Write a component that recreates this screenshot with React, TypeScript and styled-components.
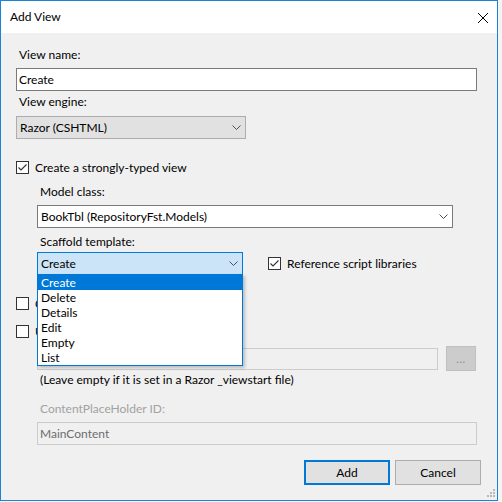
import React from "react";
import styled, { createGlobalStyle } from "styled-components";

const GlobalStyle = createGlobalStyle`
  html, body { margin: 0; padding: 0; background: #f4f4f4; }
  body {
    font-family: "Segoe UI", Lato, "Open Sans", sans-serif;
    font-size: 12px;
    color: #000000;
  }
`;

const Window = styled.div`
  position: relative;
  width: 498px;
  height: 501px;
  box-sizing: border-box;
  border: 1px solid #1883d7;
  background-color: #f0f0f0;
  display: flex;
  flex-direction: column;
`;

const TitleBar = styled.div`
  height: 32px;
  background-color: #ffffff;
  display: flex;
  align-items: center;
  justify-content: space-between;
  padding: 0 9px 0 9px;
  flex-shrink: 0;
`;

const TitleText = styled.span`
  font-size: 12px;
  line-height: 16px;
`;

const CloseBtn = styled.span`
  display: flex;
  width: 10px;
  height: 10px;
  margin-top: 1px;
`;

const Body = styled.div`
  padding: 0 20px 0 15px;
  display: flex;
  flex-direction: column;
`;

const Label = styled.div<{ $mt: number; $disabled?: boolean }>`
  margin-top: ${(p) => p.$mt}px;
  height: 16px;
  line-height: 16px;
  padding-left: 3px;
  white-space: nowrap;
  flex-shrink: 0;
  color: ${(p) => (p.$disabled ? "#a2a2a2" : "#000000")};
`;

const TextBox = styled.div<{ $mt?: number; $disabled?: boolean; $h?: number }>`
  margin-top: ${(p) => p.$mt ?? 0}px;
  height: ${(p) => p.$h ?? 23}px;
  box-sizing: border-box;
  border: 1px solid ${(p) => (p.$disabled ? "#cccccc" : "#7a7a7a")};
  background-color: ${(p) => (p.$disabled ? "#f0f0f0" : "#ffffff")};
  color: ${(p) => (p.$disabled ? "#6d6d6d" : "#000000")};
  display: flex;
  align-items: center;
  padding-left: 2px;
  flex-shrink: 0;
`;

const PathBox = styled(TextBox)`
  flex: 1;
`;

const Select = styled.div<{ $mt?: number; $w: number; $variant: "button" | "plain" | "focus" }>`
  position: relative;
  margin-top: ${(p) => p.$mt ?? 0}px;
  width: ${(p) => p.$w}px;
  height: 23px;
  box-sizing: border-box;
  border: 1px solid
    ${(p) => (p.$variant === "button" ? "#adadad" : p.$variant === "focus" ? "#0078d7" : "#7a7a7a")};
  background-color: ${(p) =>
    p.$variant === "button" ? "#e1e1e1" : p.$variant === "focus" ? "#cce4f7" : "#ffffff"};
  display: flex;
  align-items: center;
  justify-content: space-between;
  padding: 0 4px 0 3px;
  flex-shrink: 0;
`;

const Chevron = () => (
  <svg width="9" height="5" viewBox="0 0 9 5">
    <polyline points="0.5,0.5 4.5,4.5 8.5,0.5" fill="none" stroke="#505050" strokeWidth="1" />
  </svg>
);

const CheckRow = styled.div<{ $mt?: number }>`
  margin-top: ${(p) => p.$mt ?? 0}px;
  height: 16px;
  display: flex;
  align-items: center;
  gap: 6px;
  white-space: nowrap;
  flex-shrink: 0;
`;

const Box = styled.span`
  width: 13px;
  height: 13px;
  box-sizing: border-box;
  border: 1px solid #333333;
  background-color: #ffffff;
  display: flex;
  align-items: center;
  justify-content: center;
  flex-shrink: 0;
`;

const CheckBox = ({ checked }: { checked?: boolean }) => (
  <Box>
    {checked && (
      <svg width="11" height="11" viewBox="0 0 11 11">
        <polyline points="1.5,5.5 4,8 9.5,2.5" fill="none" stroke="#333333" strokeWidth="1.1" />
      </svg>
    )}
  </Box>
);

const Indent = styled.div`
  padding-left: 21px;
  display: flex;
  flex-direction: column;
`;

const ScaffoldRow = styled.div`
  margin-top: 2px;
  display: flex;
  align-items: center;
  gap: 25px;
`;

const DropList = styled.ul`
  position: absolute;
  left: -1px;
  top: 21px;
  width: 206px;
  margin: 0;
  padding: 0;
  list-style: none;
  box-sizing: border-box;
  border: 1px solid #0078d7;
  background-color: #ffffff;
  box-shadow: 2px 2px 3px rgba(0, 0, 0, 0.22);
  z-index: 2;
`;

const DropItem = styled.li<{ $active?: boolean }>`
  height: 15px;
  line-height: 15px;
  padding-left: 3px;
  background-color: ${(p) => (p.$active ? "#0078d7" : "transparent")};
  color: ${(p) => (p.$active ? "#ffffff" : "#000000")};
`;

const FileRow = styled.div`
  margin-top: 7px;
  height: 25px;
  display: flex;
  align-items: center;
  gap: 8px;
`;

const BrowseBtn = styled.div`
  width: 30px;
  height: 25px;
  box-sizing: border-box;
  border: 1px solid #bfbfbf;
  background-color: #cccccc;
  color: #8a8a8a;
  display: flex;
  align-items: center;
  justify-content: center;
  font-size: 11px;
  letter-spacing: 0.5px;
  margin-right: 1px;
`;

const ButtonRow = styled.div`
  margin-top: 15px;
  margin-right: -4px;
  display: flex;
  justify-content: flex-end;
  gap: 5px;
`;

const Button = styled.div<{ $default?: boolean }>`
  width: 86px;
  height: 25px;
  box-sizing: border-box;
  border: ${(p) => (p.$default ? "2px solid #0078d7" : "1px solid #adadad")};
  background-color: #e1e1e1;
  display: flex;
  align-items: center;
  justify-content: center;
`;

const Grip = styled.svg`
  position: absolute;
  right: 2px;
  bottom: 3px;
`;

const options = ["Create", "Delete", "Details", "Edit", "Empty", "List"];

export default function App() {
  return (
    <>
      <GlobalStyle />
      <Window>
        <TitleBar>
          <TitleText>Add View</TitleText>
          <CloseBtn>
            <svg width="10" height="10" viewBox="0 0 10 10">
              <path d="M0 0 L10 10 M10 0 L0 10" stroke="#000" strokeWidth="1" />
            </svg>
          </CloseBtn>
        </TitleBar>
        <Body>
          <Label $mt={14}>View name:</Label>
          <TextBox $mt={5}>Create</TextBox>
          <Label $mt={3}>View engine:</Label>
          <Select $mt={6} $w={230} $variant="button">
            <span>Razor (CSHTML)</span>
            <Chevron />
          </Select>
          <CheckRow $mt={20}>
            <CheckBox checked />
            <span>Create a strongly-typed view</span>
          </CheckRow>
          <Indent>
            <Label $mt={9}>Model class:</Label>
            <Select $mt={5} $w={416} $variant="plain">
              <span>BookTbl (RepositoryFst.Models)</span>
              <Chevron />
            </Select>
            <Label $mt={6}>Scaffold template:</Label>
            <ScaffoldRow>
              <Select $w={206} $variant="focus">
                <span>Create</span>
                <Chevron />
                <DropList>
                  {options.map((o, i) => (
                    <DropItem key={o} $active={i === 0}>
                      {o}
                    </DropItem>
                  ))}
                </DropList>
              </Select>
              <CheckRow>
                <CheckBox checked />
                <span>Reference script libraries</span>
              </CheckRow>
            </ScaffoldRow>
          </Indent>
          <CheckRow $mt={20}>
            <CheckBox />
            <span>Create as a partial view</span>
          </CheckRow>
          <CheckRow $mt={12}>
            <CheckBox />
            <span>Use a layout page:</span>
          </CheckRow>
          <Indent>
            <FileRow>
              <PathBox $disabled $h={22} />
              <BrowseBtn>...</BrowseBtn>
            </FileRow>
            <Label $mt={1}>(Leave empty if it is set in a Razor _viewstart file)</Label>
            <Label $mt={13} $disabled>
              ContentPlaceHolder ID:
            </Label>
            <TextBox $mt={5} $disabled>
              MainContent
            </TextBox>
          </Indent>
          <ButtonRow>
            <Button $default>Add</Button>
            <Button>Cancel</Button>
          </ButtonRow>
        </Body>
        <Grip width="9" height="9" viewBox="0 0 9 9">
          <rect x="7" y="1" width="2" height="2" fill="#b8b8b8" />
          <rect x="4" y="4" width="2" height="2" fill="#b8b8b8" />
          <rect x="7" y="4" width="2" height="2" fill="#b8b8b8" />
          <rect x="1" y="7" width="2" height="2" fill="#b8b8b8" />
          <rect x="4" y="7" width="2" height="2" fill="#b8b8b8" />
          <rect x="7" y="7" width="2" height="2" fill="#b8b8b8" />
        </Grip>
      </Window>
    </>
  );
}
